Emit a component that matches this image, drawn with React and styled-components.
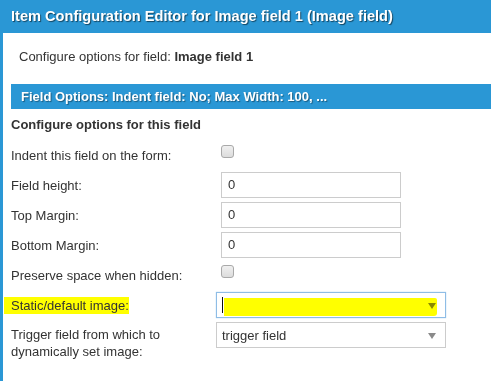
import React from "react";
import styled, { createGlobalStyle } from "styled-components";

const BLUE = "#2a97d5";

const GlobalStyle = createGlobalStyle`
  html, body {
    margin: 0;
    padding: 0;
    background: #fff;
  }
  body {
    font-family: "Liberation Sans", Arial, sans-serif;
    font-size: 13px;
    color: #333;
  }
`;

const Window = styled.div`
  min-height: 100vh;
  display: flex;
  flex-direction: column;
`;

const TitleBar = styled.div`
  height: 33px;
  background: ${BLUE};
  color: #fff;
  font-weight: bold;
  font-size: 14.6px;
  line-height: 33px;
  padding-left: 11px;
  text-shadow: 1px 1px 1px rgba(0, 0, 0, 0.55);
  white-space: nowrap;
`;

const Body = styled.div`
  flex: 1;
  border-left: 3px solid ${BLUE};
  padding-left: 8px;
`;

const Intro = styled.div`
  padding: 16px 0 19px 8px;
  line-height: 16px;

  b {
    font-weight: bold;
  }
`;

const OptionsBar = styled.div`
  height: 25px;
  line-height: 25px;
  background: ${BLUE};
  color: #fff;
  font-weight: bold;
  padding-left: 10px;
  text-shadow: 1px 1px 1px rgba(0, 0, 0, 0.4);
  white-space: nowrap;
`;

const Heading = styled.div`
  font-weight: bold;
  line-height: 16px;
  padding-top: 8px;
  margin-bottom: 9px;
`;

const Form = styled.div`
  display: grid;
  grid-template-columns: 205px 230px;
  grid-auto-rows: 26px;
  row-gap: 4px;
`;

const Label = styled.div`
  display: flex;
  align-items: ${(p) => (p.$top ? "flex-start" : "center")};
  padding-top: ${(p) => (p.$top ? "4px" : "0")};
  line-height: 17px;
  white-space: nowrap;
`;

const Marked = styled.span`
  background: #ffff00;
  margin-left: -7px;
  padding: 0 0 0 7px;
  line-height: 17px;
`;

const Control = styled.div`
  display: flex;
  align-items: flex-start;
`;

const Checkbox = styled.span`
  width: 11px;
  height: 11px;
  margin: 3px 0 0 5px;
  border: 1px solid #a9a9a9;
  border-radius: 3px;
  background: linear-gradient(#f0f0f0, #dcdcdc);
`;

const TextInput = styled.div`
  box-sizing: border-box;
  width: 180px;
  height: 26px;
  margin-left: 5px;
  border: 1px solid #cccccc;
  padding-left: 6px;
  line-height: 24px;
`;

const Select = styled.div`
  position: relative;
  box-sizing: border-box;
  width: 230px;
  height: 26px;
  display: flex;
  align-items: center;
  padding: 0 8px 0 5px;
  border: 1px solid ${(p) => (p.$focused ? "#8fbde6" : "#cccccc")};
  box-shadow: ${(p) => (p.$focused ? "0 0 1px #9cc6ea" : "none")};
`;

const Caret = styled.span`
  width: 1px;
  height: 16px;
  background: #111;
  margin-right: 1px;
`;

const Highlight = styled.span`
  flex: 1;
  height: 18px;
  margin-top: 4px;
  background: #ffff00;
  border-radius: 0 2px 3px 0;
`;

const Arrow = styled.span`
  position: absolute;
  right: 9px;
  top: 10px;
  width: 0;
  height: 0;
  border-left: 4px solid transparent;
  border-right: 4px solid transparent;
  border-top: 6px solid #8a8a8a;
  mix-blend-mode: multiply;
`;

const inputRows = [
  { label: "Field height:", value: "0" },
  { label: "Top Margin:", value: "0" },
  { label: "Bottom Margin:", value: "0" },
];

export default function App() {
  return (
    <Window>
      <GlobalStyle />
      <TitleBar>Item Configuration Editor for Image field 1 (Image field)</TitleBar>
      <Body>
        <Intro>
          Configure options for field: <b>Image field 1</b>
        </Intro>
        <OptionsBar>Field Options: Indent field: No; Max Width: 100, ...</OptionsBar>
        <Heading>Configure options for this field</Heading>
        <Form>
          <Label>Indent this field on the form:</Label>
          <Control>
            <Checkbox />
          </Control>

          {inputRows.map((r) => (
            <React.Fragment key={r.label}>
              <Label>{r.label}</Label>
              <Control>
                <TextInput>{r.value}</TextInput>
              </Control>
            </React.Fragment>
          ))}

          <Label>Preserve space when hidden:</Label>
          <Control>
            <Checkbox />
          </Control>

          <Label>
            <Marked>Static/default image:</Marked>
          </Label>
          <Control>
            <Select $focused>
              <Caret />
              <Highlight />
              <Arrow />
            </Select>
          </Control>

          <Label $top>
            Trigger field from which to
            <br />
            dynamically set image:
          </Label>
          <Control>
            <Select>
              trigger field
              <Arrow />
            </Select>
          </Control>
        </Form>
      </Body>
    </Window>
  );
}
